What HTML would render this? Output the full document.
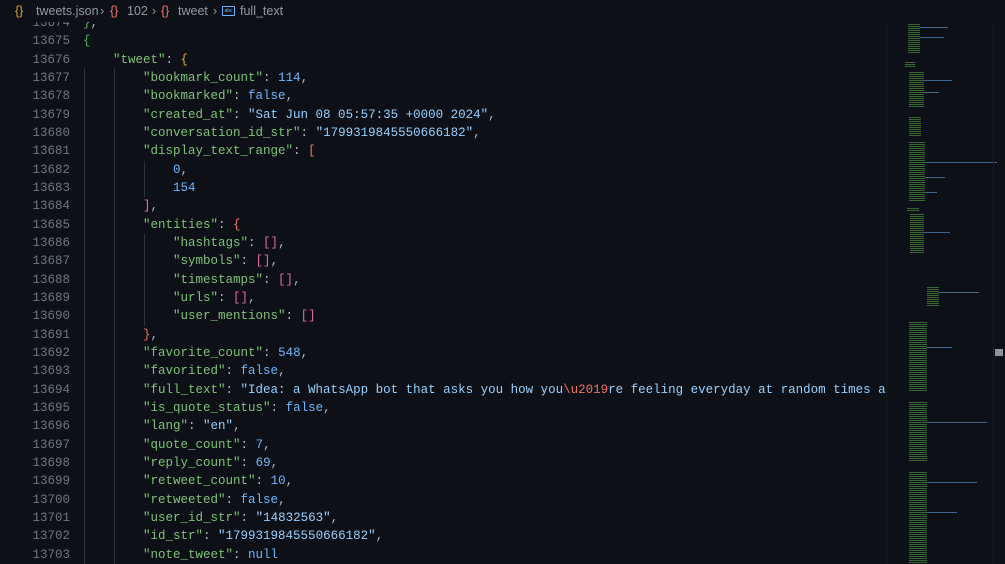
<!DOCTYPE html>
<html><head><meta charset="utf-8"><style>
*{margin:0;padding:0;box-sizing:border-box}
body{width:1005px;height:564px;overflow:hidden;background:#0d1117;font-family:"Liberation Mono",monospace;}
#bc{position:absolute;left:0;top:0;width:1005px;height:22px;background:#0d1117;font-family:"Liberation Sans",sans-serif;font-size:12.5px;color:#9198a1;line-height:22px;white-space:nowrap}
#bc span{position:absolute;top:0}
#ed{position:absolute;left:0;top:22px;width:886px;height:542px;overflow:hidden}
.ln{position:absolute;left:0;width:70px;text-align:right;color:#6e7681;font-size:12.5px;line-height:18.33px}
.cd{position:absolute;left:83px;white-space:pre;font-size:12.5px;line-height:18.33px;color:#adbac7}
.k{color:#7ec27a}.s{color:#96d0ff}.n{color:#6cb6ff}.b{color:#6cb6ff}.e{color:#f47067}
.g1{color:#56b45a}.g2{color:#daaa3f}.g3{color:#f47067}.g4{color:#dc6b9f}
.ig{position:absolute;width:1px;background:#2d333b}
#mm{position:absolute;left:886px;top:22px;width:119px;height:542px;background:#0d1117;border-left:1px solid #161b22}
.m{position:absolute;background:repeating-linear-gradient(#40703a 0 1px,transparent 1px 2px);opacity:.9}
.mb{position:absolute;height:1px;background:#4f79a8;opacity:.8}
</style></head><body>
<div id="bc">
<span style="left:15px;color:#d7a33a">{}</span>
<span style="left:36px">tweets.json</span>
<span style="left:100px">›</span>
<span style="left:110px;color:#f47067">{}</span>
<span style="left:127px">102</span>
<span style="left:152px">›</span>
<span style="left:161px;color:#f47067">{}</span>
<span style="left:178px">tweet</span>
<span style="left:213px">›</span>
<span style="left:222px;top:6px;width:13px;height:10px;border:1px solid #6cb6ff;border-radius:1px;font-size:5px;line-height:8px;color:#6cb6ff;text-align:center">abc</span>
<span style="left:240px">full_text</span>
</div>
<div id="ed">
<div class="ig" style="left:84px;top:46px;height:496px"></div>
<div class="ig" style="left:114px;top:46px;height:496px"></div>
<div class="ig" style="left:144px;top:139px;height:36px"></div>
<div class="ig" style="left:144px;top:212px;height:92px"></div>
<div id="lines" style="position:absolute;left:0;top:-8px;width:886px">
<div class="ln" style="top:0">13674</div><div class="cd" style="top:0"><span class="g1">}</span>,</div>
<div class="ln" style="top:18.33px">13675</div><div class="cd" style="top:18.33px"><span class="g1">{</span></div>
<div class="ln" style="top:36.67px">13676</div><div class="cd" style="top:36.67px">    <span class="k">"tweet"</span>: <span class="g2">{</span></div>
<div class="ln" style="top:55px">13677</div><div class="cd" style="top:55px">        <span class="k">"bookmark_count"</span>: <span class="n">114</span>,</div>
<div class="ln" style="top:73.33px">13678</div><div class="cd" style="top:73.33px">        <span class="k">"bookmarked"</span>: <span class="b">false</span>,</div>
<div class="ln" style="top:91.67px">13679</div><div class="cd" style="top:91.67px">        <span class="k">"created_at"</span>: <span class="s">"Sat Jun 08 05:57:35 +0000 2024"</span>,</div>
<div class="ln" style="top:110px">13680</div><div class="cd" style="top:110px">        <span class="k">"conversation_id_str"</span>: <span class="s">"1799319845550666182"</span>,</div>
<div class="ln" style="top:128.33px">13681</div><div class="cd" style="top:128.33px">        <span class="k">"display_text_range"</span>: <span class="g3">[</span></div>
<div class="ln" style="top:146.67px">13682</div><div class="cd" style="top:146.67px">            <span class="n">0</span>,</div>
<div class="ln" style="top:165px">13683</div><div class="cd" style="top:165px">            <span class="n">154</span></div>
<div class="ln" style="top:183.33px">13684</div><div class="cd" style="top:183.33px">        <span class="g3">]</span>,</div>
<div class="ln" style="top:201.67px">13685</div><div class="cd" style="top:201.67px">        <span class="k">"entities"</span>: <span class="g3">{</span></div>
<div class="ln" style="top:220px">13686</div><div class="cd" style="top:220px">            <span class="k">"hashtags"</span>: <span class="g4">[]</span>,</div>
<div class="ln" style="top:238.33px">13687</div><div class="cd" style="top:238.33px">            <span class="k">"symbols"</span>: <span class="g4">[]</span>,</div>
<div class="ln" style="top:256.67px">13688</div><div class="cd" style="top:256.67px">            <span class="k">"timestamps"</span>: <span class="g4">[]</span>,</div>
<div class="ln" style="top:275px">13689</div><div class="cd" style="top:275px">            <span class="k">"urls"</span>: <span class="g4">[]</span>,</div>
<div class="ln" style="top:293.33px">13690</div><div class="cd" style="top:293.33px">            <span class="k">"user_mentions"</span>: <span class="g4">[]</span></div>
<div class="ln" style="top:311.67px">13691</div><div class="cd" style="top:311.67px">        <span class="g3">}</span>,</div>
<div class="ln" style="top:330px">13692</div><div class="cd" style="top:330px">        <span class="k">"favorite_count"</span>: <span class="n">548</span>,</div>
<div class="ln" style="top:348.33px">13693</div><div class="cd" style="top:348.33px">        <span class="k">"favorited"</span>: <span class="b">false</span>,</div>
<div class="ln" style="top:366.67px">13694</div><div class="cd" style="top:366.67px">        <span class="k">"full_text"</span>: <span class="s">"Idea: a WhatsApp bot that asks you how you<span class="e">\u2019</span>re feeling everyday at random times and</span></div>
<div class="ln" style="top:385px">13695</div><div class="cd" style="top:385px">        <span class="k">"is_quote_status"</span>: <span class="b">false</span>,</div>
<div class="ln" style="top:403.33px">13696</div><div class="cd" style="top:403.33px">        <span class="k">"lang"</span>: <span class="s">"en"</span>,</div>
<div class="ln" style="top:421.67px">13697</div><div class="cd" style="top:421.67px">        <span class="k">"quote_count"</span>: <span class="n">7</span>,</div>
<div class="ln" style="top:440px">13698</div><div class="cd" style="top:440px">        <span class="k">"reply_count"</span>: <span class="n">69</span>,</div>
<div class="ln" style="top:458.33px">13699</div><div class="cd" style="top:458.33px">        <span class="k">"retweet_count"</span>: <span class="n">10</span>,</div>
<div class="ln" style="top:476.67px">13700</div><div class="cd" style="top:476.67px">        <span class="k">"retweeted"</span>: <span class="b">false</span>,</div>
<div class="ln" style="top:495px">13701</div><div class="cd" style="top:495px">        <span class="k">"user_id_str"</span>: <span class="s">"14832563"</span>,</div>
<div class="ln" style="top:513.33px">13702</div><div class="cd" style="top:513.33px">        <span class="k">"id_str"</span>: <span class="s">"1799319845550666182"</span>,</div>
<div class="ln" style="top:531.67px">13703</div><div class="cd" style="top:531.67px">        <span class="k">"note_tweet"</span>: <span class="b">null</span></div>
</div>
</div>
<div id="mm">
<div class="m" style="left:21px;top:2px;width:12px;height:30px"></div><div class="mb" style="left:33px;top:5px;width:28px"></div><div class="mb" style="left:33px;top:15px;width:24px"></div>
<div class="m" style="left:18px;top:40px;width:10px;height:6px"></div>
<div class="m" style="left:22px;top:50px;width:15px;height:36px"></div><div class="mb" style="left:37px;top:58px;width:28px"></div><div class="mb" style="left:37px;top:70px;width:15px"></div>
<div class="m" style="left:22px;top:95px;width:12px;height:20px"></div>
<div class="m" style="left:22px;top:120px;width:16px;height:60px"></div><div class="mb" style="left:38px;top:140px;width:72px"></div><div class="mb" style="left:38px;top:155px;width:20px"></div><div class="mb" style="left:38px;top:170px;width:12px"></div>
<div class="m" style="left:20px;top:186px;width:12px;height:4px"></div>
<div class="m" style="left:23px;top:192px;width:14px;height:40px"></div><div class="mb" style="left:37px;top:210px;width:26px"></div>
<div class="m" style="left:40px;top:265px;width:12px;height:20px"></div><div class="mb" style="left:52px;top:270px;width:40px"></div>
<div class="m" style="left:22px;top:300px;width:18px;height:70px"></div><div class="mb" style="left:40px;top:325px;width:25px"></div>
<div class="m" style="left:22px;top:380px;width:18px;height:60px"></div><div class="mb" style="left:40px;top:400px;width:60px"></div>
<div class="m" style="left:22px;top:450px;width:18px;height:92px"></div><div class="mb" style="left:40px;top:460px;width:50px"></div><div class="mb" style="left:40px;top:490px;width:30px"></div>
<div style="position:absolute;left:106px;top:0;width:1px;height:542px;background:#161b22"></div>
<div style="position:absolute;left:108px;top:327px;width:8px;height:7px;background:#8b949e"></div>
</div>
</body></html>
